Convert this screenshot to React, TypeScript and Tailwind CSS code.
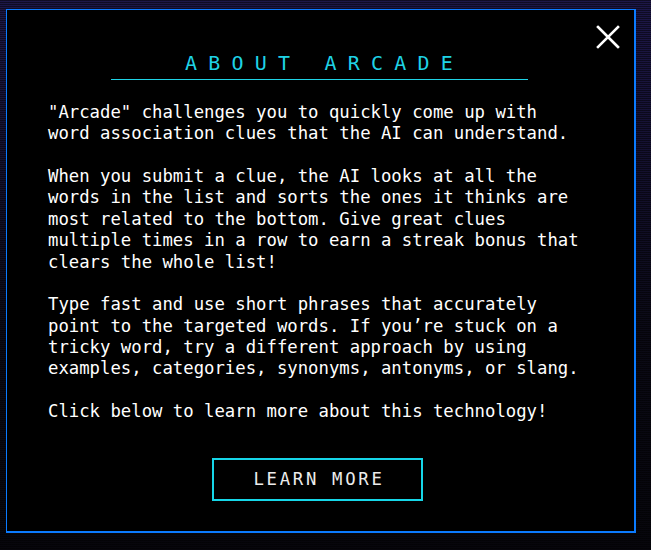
import React from 'react';

const mono = "font-['DejaVu_Sans_Mono','Liberation_Mono',monospace]";

const paragraphs = [
    '"Arcade" challenges you to quickly come up with word association clues that the AI can understand.',
    'When you submit a clue, the AI looks at all the words in the list and sorts the ones it thinks are most related to the bottom. Give great clues multiple times in a row to earn a streak bonus that clears the whole list!',
    'Type fast and use short phrases that accurately point to the targeted words. If you\u2019re stuck on a tricky word, try a different approach by using examples, categories, synonyms, antonyms, or slang.',
    'Click below to learn more about this technology!',
];

const CloseIcon: React.FC = () => (
    <svg width="24" height="24" viewBox="0 0 24 24" fill="none" stroke="white" strokeWidth="2.6" strokeLinecap="square">
        <path d="M2 2 L22 22 M22 2 L2 22" />
    </svg>
);

const App: React.FC = () => {
    return (
        <div className="min-h-screen w-full bg-[repeating-linear-gradient(to_bottom,rgba(0,0,0,0.5)_0px,rgba(0,0,0,0.5)_1px,transparent_1px,transparent_2px),linear-gradient(to_bottom,#1d1748,#0b0a16_60%,#07060c)] pt-[9px] pl-[6px]">
            <div className={`relative w-[630px] h-[524px] bg-black border border-r-2 border-b-2 border-[#0b7bff] ${mono} flex flex-col items-center`}>
                <button className="absolute top-[15px] right-[14px] p-0">
                    <CloseIcon />
                </button>

                {/* heading with underline */}
                <div className="mt-[39px] mr-[3px] w-[417px] flex flex-col">
                    <h2 className="text-center text-[20px] leading-[28px] pb-[2px] tracking-[11.2px] pl-[11px] text-[#1fd3e6]">
                        ABOUT ARCADE
                    </h2>
                    <div className="h-[1px] bg-[#1fd3e6]" />
                </div>

                <div className="mt-[22px] w-[537px] self-start ml-[41px] text-[17.3px] leading-[21.36px] text-white flex flex-col gap-[21.36px]">
                    {paragraphs.map((p, i) => (
                        <p key={i}>{p}</p>
                    ))}
                </div>

                <button className="mt-[36px] mr-[6px] w-[211px] h-[43px] border-2 border-[#16d6e8] text-[#ececec] text-[17.3px] tracking-[2.7px] pl-[3px]">
                    LEARN MORE
                </button>
            </div>
        </div>
    );
};

export default App;
